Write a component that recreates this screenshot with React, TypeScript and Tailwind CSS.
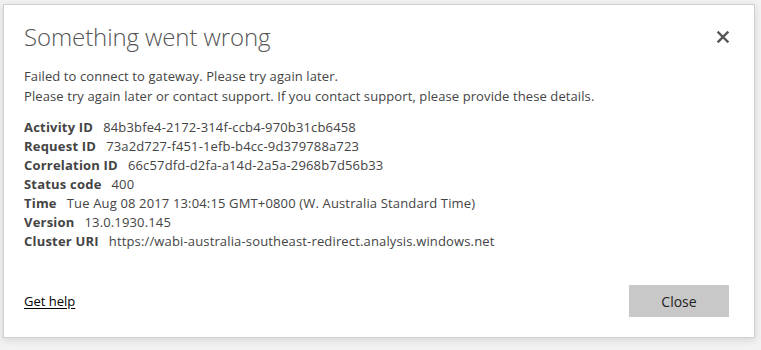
import React from "react";

const details: [string, string][] = [
  ["Activity ID", "84b3bfe4-2172-314f-ccb4-970b31cb6458"],
  ["Request ID", "73a2d727-f451-1efb-b4cc-9d379788a723"],
  ["Correlation ID", "66c57dfd-d2fa-a14d-2a5a-2968b7d56b33"],
  ["Status code", "400"],
  ["Time", "Tue Aug 08 2017 13:04:15 GMT+0800 (W. Australia Standard Time)"],
  ["Version", "13.0.1930.145"],
  ["Cluster URI", "https://wabi-australia-southeast-redirect.analysis.windows.net"],
];

export default function App() {
  return (
    <div
      className="w-[761px] h-[350px] bg-[#f2f2f2] pt-[4px] pl-[3px]"
      style={{ fontFamily: '"Open Sans", "Noto Sans", sans-serif' }}
    >
      <div className="relative w-[752px] h-[334px] bg-white border border-[#cfcfcf] shadow-[0_2px_8px_rgba(0,0,0,0.12)] pl-[20px] pr-[25px] flex flex-col">
        <button className="absolute right-[21px] top-[22px] w-[20px] h-[20px] flex items-center justify-center">
          <svg width="12" height="12" viewBox="0 0 12 12">
            <path d="M1.5 1.5 L10.5 10.5 M10.5 1.5 L1.5 10.5" stroke="#555" strokeWidth="2.4" strokeLinecap="square" />
          </svg>
        </button>
        <h1 className="mt-[16px] text-[24px] leading-[32px] font-light text-[#555] tracking-[-0.1px]">
          Something went wrong
        </h1>
        <div className="mt-[13px] text-[13px] leading-[20px] text-[#444] tracking-[0.1px]">
          <div>Failed to connect to gateway. Please try again later.</div>
          <div>Please try again later or contact support. If you contact support, please provide these details.</div>
        </div>
        <div className="mt-[12px] text-[13px] leading-[19px] text-[#444]">
          {details.map(([k, v]) => (
            <div key={k} className="flex">
              <span className="font-bold mr-[10px] tracking-[0.2px]">{k}</span>
              <span className="tracking-[0.15px]">{v}</span>
            </div>
          ))}
        </div>
        <div className="mt-auto mb-[20px] flex items-center justify-between">
          <a className="text-[13px] text-black underline underline-offset-2 pt-[2px]" href="#">
            Get help
          </a>
          <button className="w-[100px] h-[32px] bg-[#c8c8c8] text-[14px] text-[#222]">Close</button>
        </div>
      </div>
    </div>
  );
}
